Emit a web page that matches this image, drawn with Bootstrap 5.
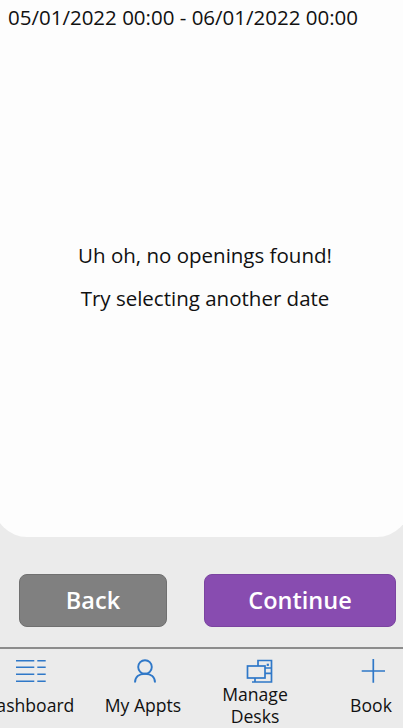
<!DOCTYPE html>
<html lang="en">
<head>
<meta charset="utf-8">
<title>Openings</title>
<link href="https://cdn.jsdelivr.net/npm/bootstrap@5.3.0/dist/css/bootstrap.min.css" rel="stylesheet">
<style>
html, body { height: 100%; }
body { background: #ebebeb; font-family: "Open Sans", sans-serif; color: #111; overflow: hidden; }
.app-shell { height: 728px; width: 403px; overflow: hidden; }
.result-panel { height: 537px; flex: none; margin: 0 -7px 0 -6px; background: #fdfdfd; border-radius: 0 0 33px 33px; }
.date-range { font-size: 20.5px; line-height: 27px; padding: 4px 0 0 14px; white-space: nowrap; }
.empty-msg { font-size: 20.5px; line-height: 27px; padding: 211px 0 0 6px; text-align: center; }
.empty-msg p { margin: 0 0 16px; }
.action-row { height: 110px; padding: 37px 7px 0 19px; gap: 37px; }
.act-btn { height: 53px; border-radius: 8px; color: #fff; font-size: 23.500px; font-weight: 600; line-height: 1; padding: 0; }
.act-back { width: 148px; background: #808080; border: 1px solid #707070; }
.act-go { width: 192px; background: #884cb0; border: 1px solid #7b44a0; }
.act-btn:hover { color: #fff; }
.tab-strip { height: 81px; border-top: 2px solid #8c8c8c; overflow: hidden; }
.tab-row { margin-left: -25px; width: 456px; }
.tab-item { width: 112px; flex: none; text-align: center; font-size: 17.600px; line-height: 22px; color: #111; padding-top: 8px; }
.tab-item.tab-last { width: 120px; }
.tab-ico { display: block; margin: 0 auto; height: 30px; width: 32px; }
.tab-ico-wide { width: 48px; }
.tab-label { height: 40px; display: flex; align-items: center; justify-content: center; margin-top: -2px; }
.tab-label-left { padding-right: 4px; }
.tab-label.two-line { display: block; margin-top: -4px; padding-top: 0; height: 44px; }
</style>
</head>
<body>
<div class="app-shell d-flex flex-column">
  <div class="result-panel">
    <div class="date-range">05/01/2022 00:00 - 06/01/2022 00:00</div>
    <div class="empty-msg">
      <p>Uh oh, no openings found!</p>
      <p>Try selecting another date</p>
    </div>
  </div>
  <div class="action-row d-flex align-items-start">
    <button type="button" class="btn act-btn act-back">Back</button>
    <button type="button" class="btn act-btn act-go">Continue</button>
  </div>
  <nav class="tab-strip">
    <div class="tab-row d-flex">
      <div class="tab-item">
        <svg class="tab-ico" viewBox="0 0 32 30" fill="none" stroke="#2f78c8" stroke-width="1.6">
          <path d="M1 3.700H19.300M22.300 3.700H30.700M1 10.300H19.300M22.300 10.300H30.700M1 17.300H19.300M22.300 17.300H30.700M1 24.300H19.300M22.300 24.300H30.700"/>
        </svg>
        <div class="tab-label tab-label-left">Dashboard</div>
      </div>
      <div class="tab-item">
        <svg class="tab-ico" viewBox="-2 0 32 30" fill="none" stroke="#2f78c8" stroke-width="1.9">
          <circle cx="16" cy="10" r="6.800"/>
          <path d="M6 25.500c0-5.500 4-8.800 10-8.800s10 3.300 10 8.800"/>
        </svg>
        <div class="tab-label">My Appts</div>
      </div>
      <div class="tab-item">
        <svg class="tab-ico tab-ico-wide" viewBox="0 0 48 30" fill="none" stroke="#2f78c8" stroke-width="1.700">
          <rect x="16.500" y="9" width="17.500" height="12"/>
          <path d="M27 9V3.500H40.500V25H21M34 11H40.500M34 16.300H40.500M24 21V25"/>
          <rect x="35.700" y="6.700" width="2.200" height="2.200" fill="#2f78c8" stroke="none"/>
        </svg>
        <div class="tab-label two-line">Manage<br>Desks</div>
      </div>
      <div class="tab-item tab-last">
        <svg class="tab-ico" viewBox="0 0 32 30" fill="none" stroke="#2f78c8" stroke-width="1.700">
          <path d="M18.300 2V25.700M6.700 14H30"/>
        </svg>
        <div class="tab-label">Book</div>
      </div>
    </div>
  </nav>
</div>
<script src="https://cdn.jsdelivr.net/npm/bootstrap@5.3.0/dist/js/bootstrap.bundle.min.js"></script>
</body>
</html>
